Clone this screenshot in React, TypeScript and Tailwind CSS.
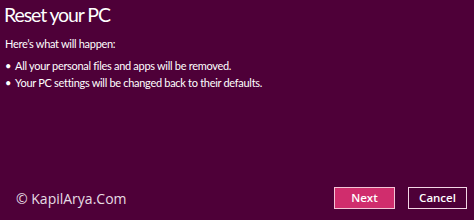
export default function App() {
  return (
    <div
      className="relative w-[474px] h-[220px] bg-[#4e0038] text-white overflow-hidden flex flex-col"
      style={{ fontFamily: '"Open Sans", "Noto Sans", sans-serif' }}
    >
      <div style={{ fontFamily: 'Lato, "Open Sans", sans-serif' }}>
        <h1 className="pl-[4px] pt-[2px] text-[19.5px] leading-[25px] font-normal tracking-[-1.1px]">Reset your PC</h1>
        <p className="pl-[5px] mt-[9px] text-[11px] leading-[16px] tracking-[-0.3px]">Here&rsquo;s what will happen:</p>
        <ul className="pl-[5px] mt-[6px] text-[11px] leading-[16.5px] tracking-[-0.3px]">
          <li className="flex gap-[4px]">
            <span>&bull;</span>
            <span>All your personal files and apps will be removed.</span>
          </li>
          <li className="flex gap-[4px]">
            <span>&bull;</span>
            <span>Your PC settings will be changed back to their defaults.</span>
          </li>
        </ul>
      </div>

      <div className="mt-auto mb-[11px] flex items-center">
        <span className="ml-[16px] text-[14px] text-[#e6dce3]">&copy; KapilArya.Com</span>
        <div className="ml-auto mr-[7px] flex gap-[13px]">
          <button className="w-[61px] h-[22px] bg-[#d02d6d] border border-[#f4c4d6] text-[11.5px] font-semibold">
            Next
          </button>
          <button className="w-[59px] h-[22px] bg-[#4e0038] border border-[#f3d6e6] text-[11.5px] font-semibold">
            Cancel
          </button>
        </div>
      </div>
    </div>
  );
}
